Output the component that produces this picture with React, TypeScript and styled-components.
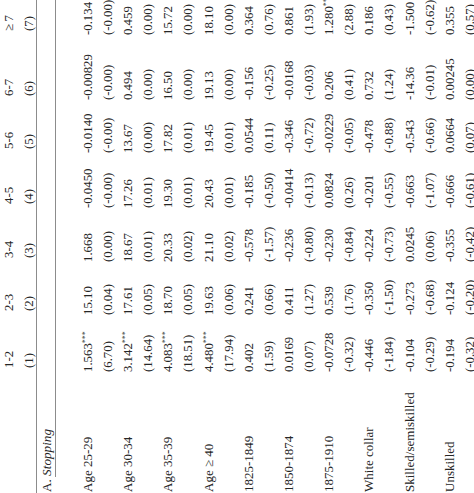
import React from "react";
import styled, { createGlobalStyle } from "styled-components";

const GlobalStyle = createGlobalStyle`
  html,
  body {
    margin: 0;
    padding: 0;
    background: #fff;
    overflow: hidden;
  }
`;

// label column + seven result columns, measured on the unrotated table
const COLUMNS = "121px 57px 53px 54px 55px 53px 65px 35px";

const Page = styled.div`
  width: 474px;
  height: 493px;
  overflow: hidden;
  background: #fff;
`;

// the table is printed sideways (landscape page), so lay it out upright and turn it
const Sheet = styled.div`
  width: 493px;
  height: 474px;
  transform-origin: 0 0;
  transform: translateY(493px) rotate(-90deg);
  font-family: "Liberation Serif", "Times New Roman", serif;
  font-size: 12.8px;
  color: #262626;
  white-space: nowrap;
`;

const HeadRow = styled.div<{ $height: number; $top: number }>`
  display: grid;
  grid-template-columns: ${COLUMNS};
  box-sizing: border-box;
  height: ${(p) => p.$height}px;
  padding-top: ${(p) => p.$top}px;
  line-height: 14px;
`;

const HeadCell = styled.div`
  padding-left: 4px;
`;

const Rule = styled.div<{ $inset?: number }>`
  height: 1px;
  margin-left: ${(p) => p.$inset ?? 0}px;
  background: #8c8c8c;
`;

const Panel = styled.div`
  box-sizing: border-box;
  height: 18px;
  padding: 3px 0 0 1px;
  font-size: 13.2px;
  line-height: 14px;
`;

const PanelName = styled.span`
  font-style: italic;
`;

const Body = styled.div`
  padding-top: 22px;
`;

const Line = styled.div`
  display: grid;
  grid-template-columns: ${COLUMNS};
  height: 20.1px;
  line-height: 20.1px;
`;

const Label = styled.div`
  padding-left: 1px;
  font-size: 13px;
`;

const Value = styled.div``;

const Stars = styled.sup`
  font-size: 8px;
  line-height: 0;
  vertical-align: 4px;
`;

const heads = ["1-2", "2-3", "3-4", "4-5", "5-6", "6-7", "\u2265\u20097"];

interface Entry {
  label: string;
  coef: string[];
  se: string[];
}

const rows: Entry[] = [
  {
    label: "Age 25-29",
    coef: ["1.563***", "15.10", "1.668", "-0.0450", "-0.0140", "-0.00829", "-0.134"],
    se: ["(6.70)", "(0.04)", "(0.00)", "(-0.00)", "(-0.00)", "(-0.00)", "(-0.00)"],
  },
  {
    label: "Age 30-34",
    coef: ["3.142***", "17.61", "18.67", "17.26", "13.67", "0.494", "0.459"],
    se: ["(14.64)", "(0.05)", "(0.01)", "(0.01)", "(0.00)", "(0.00)", "(0.00)"],
  },
  {
    label: "Age 35-39",
    coef: ["4.083***", "18.70", "20.33", "19.30", "17.82", "16.50", "15.72"],
    se: ["(18.51)", "(0.05)", "(0.02)", "(0.01)", "(0.01)", "(0.00)", "(0.00)"],
  },
  {
    label: "Age \u2265 40",
    coef: ["4.480***", "19.63", "21.10", "20.43", "19.45", "19.13", "18.10"],
    se: ["(17.94)", "(0.06)", "(0.02)", "(0.01)", "(0.01)", "(0.00)", "(0.00)"],
  },
  {
    label: "1825-1849",
    coef: ["0.402", "0.241", "-0.578", "-0.185", "0.0544", "-0.156", "0.364"],
    se: ["(1.59)", "(0.66)", "(-1.57)", "(-0.50)", "(0.11)", "(-0.25)", "(0.76)"],
  },
  {
    label: "1850-1874",
    coef: ["0.0169", "0.411", "-0.236", "-0.0414", "-0.346", "-0.0168", "0.861"],
    se: ["(0.07)", "(1.27)", "(-0.80)", "(-0.13)", "(-0.72)", "(-0.03)", "(1.93)"],
  },
  {
    label: "1875-1910",
    coef: ["-0.0728", "0.539", "-0.230", "0.0824", "-0.0229", "0.206", "1.280**"],
    se: ["(-0.32)", "(1.76)", "(-0.84)", "(0.26)", "(-0.05)", "(0.41)", "(2.88)"],
  },
  {
    label: "White collar",
    coef: ["-0.446", "-0.350", "-0.224", "-0.201", "-0.478", "0.732", "0.186"],
    se: ["(-1.84)", "(-1.50)", "(-0.73)", "(-0.55)", "(-0.88)", "(1.24)", "(0.43)"],
  },
  {
    label: "Skilled/semiskilled",
    coef: ["-0.104", "-0.273", "0.0245", "-0.663", "-0.543", "-14.36", "-1.500"],
    se: ["(-0.29)", "(-0.68)", "(0.06)", "(-1.07)", "(-0.66)", "(-0.01)", "(-0.62)"],
  },
  {
    label: "Unskilled",
    coef: ["-0.194", "-0.124", "-0.355", "-0.666", "0.0664", "0.00245", "0.355"],
    se: ["(-0.32)", "(-0.20)", "(-0.42)", "(-0.61)", "(0.07)", "(0.00)", "(0.57)"],
  },
];

const Coef = ({ text }: { text: string }) => {
  const num = text.replace(/\*+$/, "");
  const stars = text.slice(num.length);
  return (
    <Value>
      {num}
      {stars && <Stars>{stars}</Stars>}
    </Value>
  );
};

export default function App() {
  return (
    <>
      <GlobalStyle />
      <Page>
        <Sheet>
          <HeadRow $height={17} $top={2}>
            <div />
            {heads.map((h) => (
              <HeadCell key={h}>{h}</HeadCell>
            ))}
          </HeadRow>
          <HeadRow $height={19} $top={5}>
            <div />
            {heads.map((h, i) => (
              <HeadCell key={h}>({i + 1})</HeadCell>
            ))}
          </HeadRow>
          <Rule />
          <Panel>
            A. <PanelName>Stopping</PanelName>
          </Panel>
          <Rule $inset={16} />
          <Body>
            {rows.map((r) => (
              <React.Fragment key={r.label}>
                <Line>
                  <Label>{r.label}</Label>
                  {r.coef.map((c, i) => (
                    <Coef key={i} text={c} />
                  ))}
                </Line>
                <Line>
                  <Label />
                  {r.se.map((s, i) => (
                    <Value key={i}>{s}</Value>
                  ))}
                </Line>
              </React.Fragment>
            ))}
          </Body>
        </Sheet>
      </Page>
    </>
  );
}
